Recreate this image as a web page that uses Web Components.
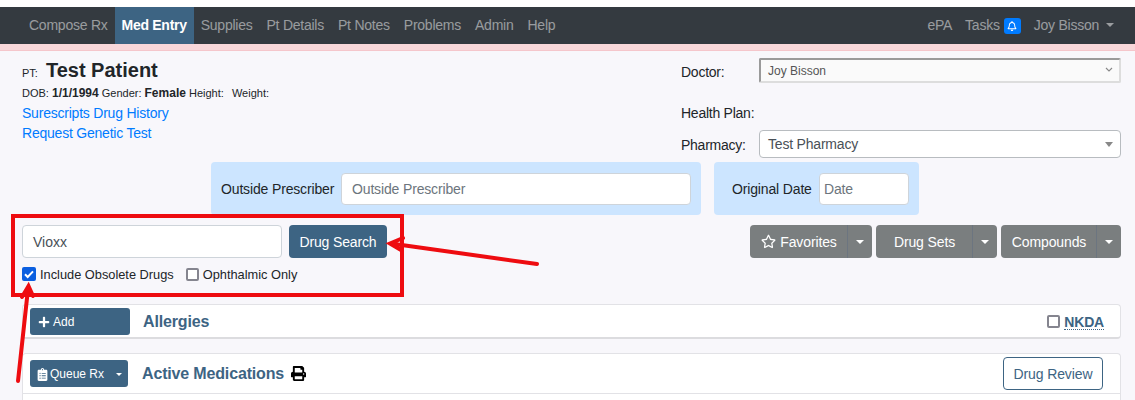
<!DOCTYPE html>
<html><head><meta charset="utf-8">
<style>
html,body{margin:0;padding:0;height:400px;overflow:hidden;background:#fff;font-family:"Liberation Sans",Arial,sans-serif;font-size:14px;color:#212529}
</style></head><body>
<rx-app>
  <app-nav></app-nav>
  <patient-header></patient-header>
  <prescriber-bar></prescriber-bar>
  <search-row></search-row>
  <panel-card kind="allergies"></panel-card>
  <panel-card kind="active"></panel-card>
  <note-overlay></note-overlay>
</rx-app>
<script>
const ICON={
star:['0 0 576 512','M528.1 171.5L382 150.2 316.7 17.8c-11.7-23.6-45.6-23.9-57.4 0L194 150.2 47.9 171.5c-26.2 3.8-36.7 36.1-17.7 54.6l105.7 103-25 145.5c-4.5 26.3 23.2 46 46.4 33.7L288 439.6l130.7 68.7c23.2 12.2 50.9-7.4 46.4-33.7l-25-145.5 105.7-103c19-18.5 8.5-50.8-17.7-54.6zM388.6 312.3l23.7 138.4L288 385.4l-124.3 65.3 23.7-138.4-100.6-98 139-20.2 62.2-126 62.2 126 139 20.2-100.6 98z'],
plus:['0 0 448 512','M416 208H272V64c0-17.67-14.33-32-32-32h-32c-17.67 0-32 14.33-32 32v144H32c-17.67 0-32 14.33-32 32v32c0 17.67 14.33 32 32 32h144v144c0 17.67 14.33 32 32 32h32c17.67 0 32-14.33 32-32V304h144c17.67 0 32-14.33 32-32v-32c0-17.67-14.33-32-32-32z'],
print:['0 0 512 512','M448 192V77.25c0-8.49-3.37-16.62-9.37-22.63L393.37 9.37c-6-6-14.14-9.37-22.63-9.37H96C78.33 0 64 14.33 64 32v160c-35.35 0-64 28.65-64 64v112c0 8.84 7.16 16 16 16h48v96c0 17.67 14.33 32 32 32h320c17.67 0 32-14.33 32-32v-96h48c8.84 0 16-7.16 16-16V256c0-35.35-28.65-64-64-64zm-64 256H128v-96h256v96zm0-224H128V64h192v48c0 8.84 7.16 16 16 16h48v96zm48 72c-13.25 0-24-10.75-24-24 0-13.26 10.75-24 24-24s24 10.74 24 24c0 13.25-10.75 24-24 24z'],
clip:['0 0 384 512','M336 64h-80c0-35.3-28.7-64-64-64s-64 28.7-64 64H48C21.5 64 0 85.5 0 112v352c0 26.5 21.5 48 48 48h288c26.5 0 48-21.5 48-48V112c0-26.5-21.5-48-48-48zM96 424c-13.3 0-24-10.7-24-24s10.7-24 24-24 24 10.7 24 24-10.7 24-24 24zm0-96c-13.3 0-24-10.7-24-24s10.7-24 24-24 24 10.7 24 24-10.7 24-24 24zm0-96c-13.3 0-24-10.7-24-24s10.7-24 24-24 24 10.7 24 24-10.7 24-24 24zm96-192c13.3 0 24 10.7 24 24s-10.7 24-24 24-24-10.7-24-24 10.7-24 24-24zm128 368c0 4.4-3.6 8-8 8H168c-4.4 0-8-3.6-8-8v-16c0-4.4 3.6-8 8-8h144c4.4 0 8 3.6 8 8v16zm0-96c0 4.4-3.6 8-8 8H168c-4.4 0-8-3.6-8-8v-16c0-4.4 3.6-8 8-8h144c4.4 0 8 3.6 8 8v16zm0-96c0 4.4-3.6 8-8 8H168c-4.4 0-8-3.6-8-8v-16c0-4.4 3.6-8 8-8h144c4.4 0 8 3.6 8 8v16z'],
bell:['0 0 448 512','M439.39 362.29c-19.32-20.76-55.47-51.99-55.47-154.29 0-77.7-54.48-139.9-127.94-155.16V32c0-17.67-14.32-32-31.98-32s-31.98 14.33-31.98 32v20.84C118.56 68.1 64.08 130.3 64.08 208c0 102.3-36.15 133.53-55.47 154.29-6 6.45-8.66 14.16-8.61 21.71.11 16.4 12.98 32 32.1 32h383.8c19.12 0 32-15.6 32.1-32 .05-7.55-2.61-15.27-8.61-21.71zM67.53 368c21.22-27.97 44.42-74.33 44.53-159.42 0-.2-.06-.38-.06-.58 0-61.86 50.14-112 112-112s112 50.14 112 112c0 .2-.06.38-.06.58.11 85.1 23.31 131.46 44.53 159.42H67.53zM224 512c35.32 0 63.97-28.65 63.97-64H160.03c0 35.35 28.65 64 63.97 64z']
};
const ico=(n,s,c='currentColor')=>`<svg width="${s}" height="${s}" viewBox="${ICON[n][0]}" fill="${c}" style="display:block;flex:none"><path d="${ICON[n][1]}"/></svg>`;
const base=':host{box-sizing:border-box}*{box-sizing:border-box}';
function def(name,html){
  customElements.define(name,class extends HTMLElement{
    constructor(){super();this.attachShadow({mode:'open'}).innerHTML=typeof html==='function'?html(this):html;}
  });
}
def('rx-app',`<style>${base}:host{display:block;position:relative;height:400px;padding-top:7px;overflow:hidden}</style><slot></slot>`);

def('app-nav',`<style>${base}
:host{display:block;background:#f8f7fb;font-size:14px;letter-spacing:-.24px;white-space:nowrap}
nav{height:37px;background:#343a40;display:flex;align-items:stretch;padding:0 14px 0 22px;}
a{display:flex;align-items:center;padding:0 7px 2px;color:rgba(255,255,255,.5)}
a.on{background:#3d6483;color:#fff;font-weight:bold;letter-spacing:-.28px}
.sp{flex:1}
.badge{display:flex;align-items:center;justify-content:center;width:17px;height:16px;background:#007bff;border-radius:3px;margin:2px 0 0 4px}
.caret{width:0;height:0;border:4.2px solid transparent;border-top-color:rgba(255,255,255,.5);border-bottom:0;margin-left:7px}
.pink{height:7px;background:#f8d7da;border-bottom:1px solid #f5c6cb}
</style>
<nav><a>Compose Rx</a><a class="on">Med Entry</a><a>Supplies</a><a>Pt Details</a><a>Pt Notes</a><a>Problems</a><a>Admin</a><a>Help</a><span class="sp"></span>
<a style="padding-right:6px">ePA</a><a style="padding-right:6px">Tasks<span class="badge">${ico('bell',10,'#fff')}</span></a><a>Joy Bisson<span class="caret"></span></a></nav><div class="pink"></div>`);

def('patient-header',`<style>${base}
:host{display:block;background:#f8f7fb;height:111px;padding:7px 14px 0 22px}
.g{display:grid;grid-template-columns:1fr 440px}
.pt{display:flex;align-items:baseline;font-size:11px;line-height:24px}
.pt b{font-size:20px;margin-left:8px}
.dem{font-size:11px;line-height:14px;margin-top:1px;white-space:pre;color:#212529}
.dem b{font-size:12px}
.links{font-size:14px;line-height:20px;color:#007bff;margin-top:3px;letter-spacing:-.22px}
.r{display:grid;grid-template-columns:78px 362px;font-size:14px;align-items:center;letter-spacing:-.25px}
.sel{position:relative;display:flex;align-items:center}
.doc{height:25px;width:362px;border:2px solid;border-color:#9a9a9a #ddd #ddd #9a9a9a;border-radius:2px;background:#fafafa;font-size:12px;color:#555;padding:0 7px 0;display:flex;align-items:center;letter-spacing:0}
.ph{height:28px;width:362px;border:1px solid #b8bcc0;border-radius:4px;background:#fff;color:#495057;padding:0 8px;display:flex;align-items:center;font-size:14px;letter-spacing:-.2px}
svg.a{position:absolute;right:8px;top:50%;margin-top:-4px}
.hp{height:47px;display:flex;align-items:center;grid-column:1/3;padding-top:13px}
.lb{padding-top:2px}
</style>
<div class="g"><div>
<div class="pt"><span>PT:</span><b>Test Patient</b></div>
<div class="dem">DOB: <b>1/1/1994</b> Gender: <b>Female</b> Height:  <span style="margin-left:2px">Weight:</span></div>
<div class="links"><div>Surescripts Drug History</div><div>Request Genetic Test</div></div>
</div>
<div class="r">
<div class="lb" style="padding-top:3px">Doctor:</div><div class="sel"><div class="doc">Joy Bisson</div><svg class="a" width="8" height="6" viewBox="0 0 8 6"><path d="M1 1l3 3 3-3" fill="none" stroke="#888" stroke-width="1.1"/></svg></div>
<div class="hp">Health Plan:</div>
<div class="lb">Pharmacy:</div><div class="sel"><div class="ph">Test Pharmacy</div><svg class="a" width="8" height="6" viewBox="0 0 8 6" style="margin-top:-2px"><path d="M0 0h8L4 5z" fill="#888"/></svg></div>
</div></div>`);

def('prescriber-bar',`<style>${base}
:host{display:flex;background:#f8f7fb;padding-left:211px;gap:13px;height:53px;white-space:nowrap;letter-spacing:-.15px}
.b{background:#cce5ff;border-radius:4px;display:flex;align-items:center;font-size:14px;padding:0 10px;height:53px}
.i{background:#fff;border:1px solid #ced4da;border-radius:4px;height:32px;display:flex;align-items:center;color:#6c757d}
</style>
<div class="b" style="width:490px"><span style="width:120px;flex:none">Outside Prescriber</span><div class="i" style="width:350px;padding-left:10px">Outside Prescriber</div></div>
<div class="b" style="width:205px;padding-left:18px"><span style="width:87px;flex:none">Original Date</span><div class="i" style="width:90px;padding-left:4px">Date</div></div>`);

def('split-btn',el=>`<style>${base}
:host{display:flex;height:33px;background:#7a7e7f;border-radius:4px;color:#fff;font-size:14px;width:var(--w);letter-spacing:-.12px}
.m{flex:1;display:flex;align-items:center;justify-content:center;gap:4px;padding-left:1px}
.d{width:25px;border-left:1px solid #6c7580;display:flex;align-items:center;justify-content:center}
.c{width:0;height:0;border:4.2px solid transparent;border-top-color:#fff;border-bottom:0}
</style><div class="m"><slot></slot></div><div class="d"><span class="c"></span></div>`);

def('search-row',`<style>${base}
:host{display:flex;justify-content:space-between;background:#f8f7fb;padding:10px 14px 0 22px;height:89px}
.top{display:flex;gap:7px}
.in{width:260px;height:33px;border:1px solid #ced4da;border-radius:4px;background:#fff;display:flex;align-items:center;padding-left:10px;color:#495057;font-size:14px}
.go{width:98px;height:33px;background:#3d6483;border-radius:4px;color:#fff;display:flex;align-items:center;justify-content:center;font-size:14px;letter-spacing:-.15px}
.chk{display:flex;align-items:center;gap:12px;margin-top:10px;font-size:12.8px;line-height:14px;height:14px;white-space:nowrap}
label{display:flex;align-items:center;gap:4px}
.cb{width:14px;height:14px;border-radius:2px;display:block;flex:none;margin-top:-2px}
.off{border:2px solid #85858f;background:#fff;width:13px;height:13px}
.on{background:#0b5fe0;width:14px}
.right{display:flex;gap:4px;align-items:flex-start}
</style>
<div><div class="top"><div class="in">Vioxx</div><div class="go">Drug Search</div></div>
<div class="chk"><label><svg class="cb on" viewBox="0 0 14 14"><path d="M3 7.3l2.7 2.7L11 4.4" fill="none" stroke="#fff" stroke-width="2"/></svg>Include Obsolete Drugs</label><label><span class="cb off"></span>Ophthalmic Only</label></div></div>
<div class="right"><split-btn style="--w:122px">${ico('star',15,'#fff')}Favorites</split-btn><split-btn style="--w:121px">Drug Sets</split-btn><split-btn style="--w:120px">Compounds</split-btn></div>`);

def('panel-card',el=>{
 const al=el.getAttribute('kind')==='allergies';
 return `<style>${base}
:host{display:block;background:#f8f7fb;padding:0 14px 0 22px;height:${al?'49px':'50px'}}
.c{background:#fff;border:1px solid #e2e2e6;border-bottom:${al?'2px solid #dcdcdf':'none'};border-radius:${al?'4px':'4px 4px 0 0'};height:${al?'35px':'50px'};display:flex;flex-direction:column}
.h{display:flex;align-items:center;height:${al?'33px':'40px'};padding:0 ${al?16:17}px 0 7px;${al?'':'border-bottom:1px solid #e2e2e6;'}}
.btn{height:27px;background:#3d6483;border-radius:3px;color:#fff;font-size:12px;display:flex;align-items:center;padding-top:1px}
h3{margin:0;font-size:16px;color:#3d6483;font-weight:bold;letter-spacing:-.16px}
.sp{flex:1}
.cb{width:13px;height:13px;border:2px solid #85858f;border-radius:2px;background:#fff;margin:1px 4px 0 0}
.n{font-weight:bold;color:#3d6483;font-size:14px;border-bottom:1px dotted #3d6483;line-height:14px;margin-top:2px;letter-spacing:-.2px}
.dr{width:100px;height:33px;border:1px solid #3d6483;border-radius:4px;color:#3d6483;font-size:14px;display:flex;align-items:center;justify-content:center;letter-spacing:-.12px}
.c2{width:0;height:0;border:3.5px solid transparent;border-top-color:#fff;border-bottom:0;margin-left:auto;margin-right:6px}
</style><div class="c"><div class="h">${al?
`<div class="btn" style="width:100px;padding-left:8px;gap:3px">${ico('plus',12,'#fff')}Add</div><h3 style="margin-left:13px;padding-top:2px">Allergies</h3><span class="sp"></span><span class="cb"></span><span class="n">NKDA</span>`:
`<div class="btn" style="width:98px;padding-left:6px;gap:1px">${ico('clip',13,'#fff')}Queue Rx<span class="c2"></span></div><h3 style="margin-left:14px">Active Medications</h3><span style="margin-left:7px">${ico('print',15,'#000')}</span><span class="sp"></span><div class="dr">Drug Review</div>`}</div></div>`;});

def('note-overlay',`<style>:host{position:absolute;left:0;top:0;width:1135px;height:400px;pointer-events:none;display:block}svg{display:block}</style>
<svg width="1135" height="400" fill="none" stroke="#ee0c10">
<rect x="13" y="216" width="389" height="79" stroke-width="4"/>
<path d="M537 264L391 243.5M403 238L390 243.5L401 250" stroke-width="4" stroke-linecap="round"/>
<path d="M18 381L28 289M22 297L28.5 286L33 296" stroke-width="4" stroke-linecap="round"/>
</svg>`);
</script>
</body></html>
